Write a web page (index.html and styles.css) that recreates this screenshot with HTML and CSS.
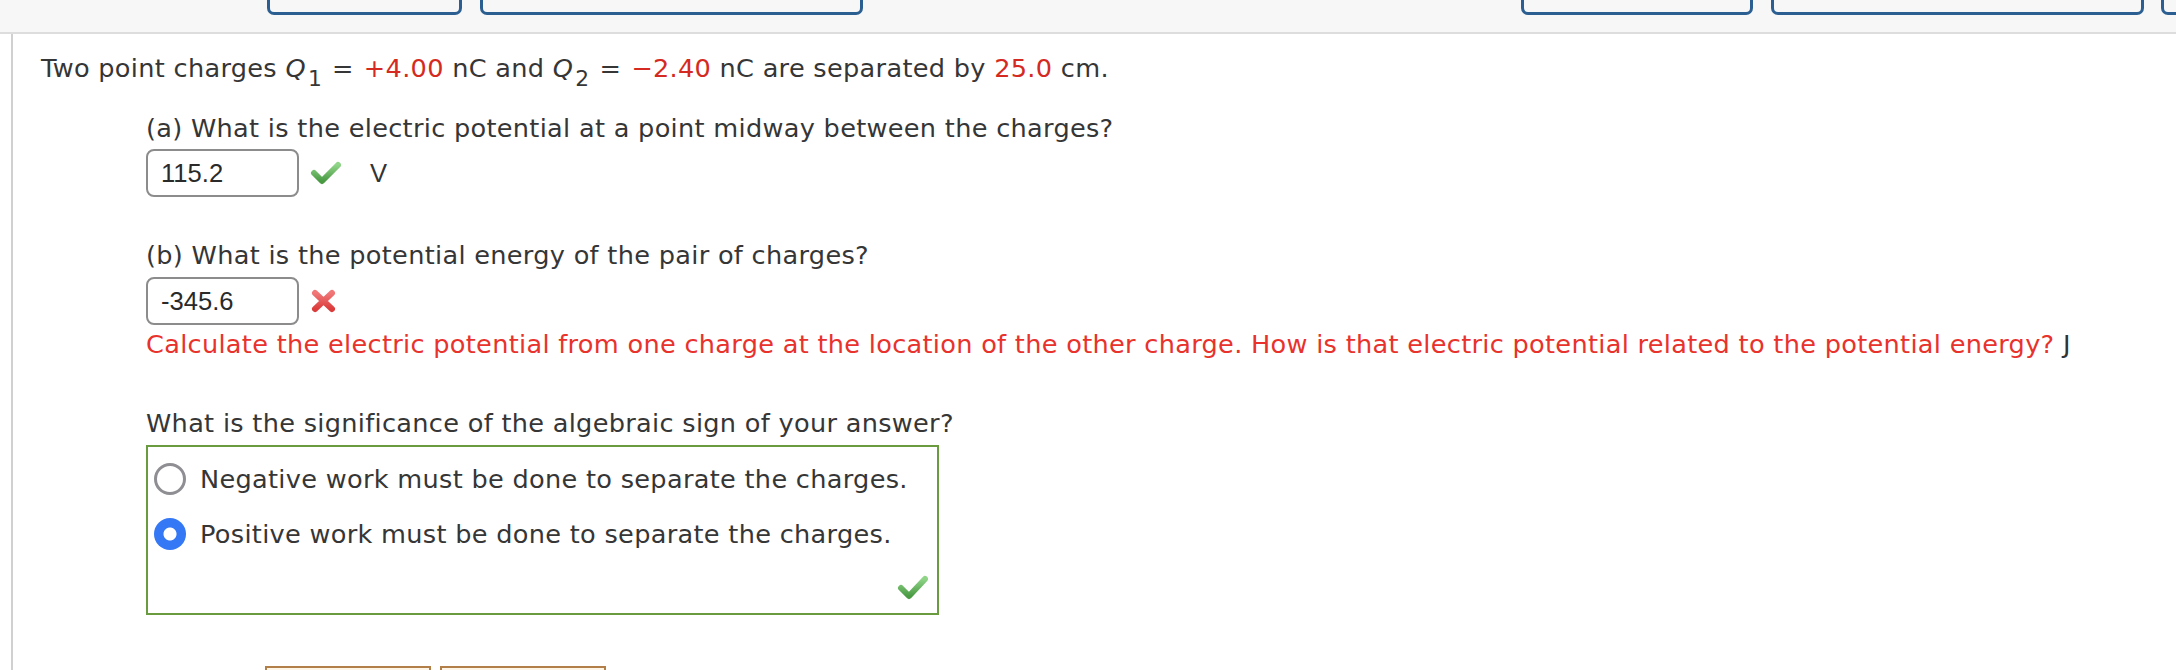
FILE: index.html
```html
<!DOCTYPE html>
<html>
<head>
<meta charset="utf-8">
<link rel="stylesheet" href="styles.css">
</head>
<body>
<div class="topbar">
  <div class="tb-btn w195"></div>
  <div class="tb-btn w383"></div>
  <div class="tb-btn w232 far"></div>
  <div class="tb-btn w373"></div>
  <div class="tb-btn w60 near"></div>
</div>
<div class="main">
  <p class="stem">Two point charges <span class="var">Q</span><span class="sub">1</span><span class="eq">=</span><span class="val">+4.00</span> nC and <span class="var">Q</span><span class="sub">2</span><span class="eq">=</span><span class="val">&minus;2.40</span> nC are separated by <span class="val">25.0</span> cm.</p>
  <div class="part">
    <p class="q qa">(a) What is the electric potential at a point midway between the charges?</p>
    <div class="answer aa">
      <div class="input">115.2</div>
      <svg class="ok" viewBox="0 0 31 24" width="31" height="24"><defs><linearGradient id="g1" x1="0" y1="0" x2="0" y2="1"><stop offset="0" stop-color="#8fd487"/><stop offset="1" stop-color="#4a9a44"/></linearGradient></defs><path d="M4 12 L12 20 L28 4" fill="none" stroke="url(#g1)" stroke-width="6" stroke-linecap="round" stroke-linejoin="round"/></svg>
      <span class="unit">V</span>
    </div>
    <p class="q qb">(b) What is the potential energy of the pair of charges?</p>
    <div class="answer ab">
      <div class="input">-345.6</div>
      <svg class="bad" viewBox="0 0 27 26" width="27" height="26"><defs><linearGradient id="g2" x1="0" y1="0" x2="0" y2="1"><stop offset="0" stop-color="#f07878"/><stop offset="1" stop-color="#dc3b3b"/></linearGradient></defs><path d="M5 5 L22 21 M22 5 L5 21" fill="none" stroke="url(#g2)" stroke-width="6" stroke-linecap="round"/></svg>
    </div>
    <p class="feedback"><span class="fb-red">Calculate the electric potential from one charge at the location of the other charge. How is that electric potential related to the potential energy?</span> J</p>
    <p class="q qc">What is the significance of the algebraic sign of your answer?</p>
    <div class="choices">
      <div class="choice"><span class="radio"></span><span class="label">Negative work must be done to separate the charges.</span></div>
      <div class="choice second"><span class="radio on"></span><span class="label">Positive work must be done to separate the charges.</span></div>
      <div class="box-mark">
        <svg class="ok" viewBox="0 0 31 25" width="31" height="25"><defs><linearGradient id="g3" x1="0" y1="0" x2="0" y2="1"><stop offset="0" stop-color="#8fd487"/><stop offset="1" stop-color="#4a9a44"/></linearGradient></defs><path d="M4 13 L12 21 L28 4" fill="none" stroke="url(#g3)" stroke-width="6" stroke-linecap="round" stroke-linejoin="round"/></svg>
      </div>
    </div>
  </div>
  <div class="bottom">
    <span class="help"></span>
    <div class="btn"></div>
    <div class="btn"></div>
  </div>
</div>
</body>
</html>
```
FILE: styles.css
```css
html, body {
  margin: 0;
  padding: 0;
  background: #ffffff;
  overflow: hidden;
}
body {
  width: 2176px;
  height: 670px;
  font-family: "DejaVu Sans", Verdana, sans-serif;
  font-size: 25.6px;
  letter-spacing: 0.3px;
  color: #363636;
}
p { margin: 0; }

.topbar {
  height: 32px;
  background: #f7f7f7;
  border-bottom: 2px solid #dddddd;
  display: flex;
  align-items: flex-start;
  padding-left: 267px;
}
.tb-btn {
  height: 12px;
  border: 3px solid #2b5f92;
  border-top: 0;
  border-radius: 0 0 7px 7px;
  flex: none;
  margin-right: 18px;
}
.w195 { width: 189px; }
.w383 { width: 377px; }
.w232 { width: 226px; }
.w373 { width: 367px; margin-right: 17px; }
.w60 { width: 60px; }
.far { margin-left: 640px; }

.main {
  margin-left: 11px;
  border-left: 2px solid #d0d0d0;
  padding-left: 28px;
  padding-top: 16px;
  height: 636px;
  box-sizing: border-box;
  overflow: hidden;
}
.stem, .q, .feedback {
  line-height: 36px;
  white-space: nowrap;
}
.var { font-style: italic; }
.sub {
  font-size: 0.85em;
  position: relative;
  top: 9px;
  margin-left: 2px;
}
.eq { margin: 0 10px; }
.val { color: #d52a22; }

.part { padding-left: 105px; }
.qa { margin-top: 22px; }
.qb { margin-top: 40px; }
.qc { margin-top: 43px; }

.answer {
  display: flex;
  align-items: center;
  height: 48px;
}
.aa { margin-top: 3px; }
.ab { margin-top: 4px; }
.input {
  width: 153px;
  height: 48px;
  box-sizing: border-box;
  border: 2px solid #8c8c8c;
  border-radius: 8px;
  padding-left: 13px;
  font-family: "Liberation Sans", Arial, sans-serif;
  font-size: 25.6px;
  letter-spacing: 0;
  line-height: 44px;
  color: #2a2a2a;
}
.answer svg { margin-left: 11px; display: block; }
.unit {
  font-family: "Liberation Sans", Arial, sans-serif;
  font-size: 25.6px;
  letter-spacing: 0;
  margin-left: 29px;
  color: #333;
}

.feedback { margin-top: 1px; color: #333; }
.fb-red { color: #e8322c; }

.choices {
  margin-top: 4px;
  width: 793px;
  height: 170px;
  box-sizing: border-box;
  border: 2px solid #6b9b3f;
  padding: 16px 9px 13px 6px;
  display: flex;
  flex-direction: column;
}
.choice {
  display: flex;
  align-items: center;
  height: 32px;
}
.choice.second { margin-top: 23px; }
.radio {
  width: 32px;
  height: 32px;
  box-sizing: border-box;
  border: 3px solid #8e8e93;
  border-radius: 50%;
  background: #fff;
  flex: none;
}
.radio.on {
  border: 0;
  background: radial-gradient(circle, #ffffff 0 6px, #3478f6 7px);
}
.label {
  margin-left: 14px;
  white-space: nowrap;
}
.box-mark {
  margin-top: 25px;
  display: flex;
  justify-content: flex-end;
}
.box-mark svg { display: block; }

.bottom {
  margin-top: 51px;
  display: flex;
  align-items: flex-start;
  padding-left: 20px;
}
.help {
  width: 204px;
  flex: none;
}
.btn {
  width: 166px;
  height: 40px;
  box-sizing: border-box;
  border: 2px solid #b17f47;
  background: linear-gradient(#fdeed9, #f8d9b0);
  box-shadow: inset 0 2px 0 #fff6ea;
  margin-right: 9px;
  flex: none;
}
```
